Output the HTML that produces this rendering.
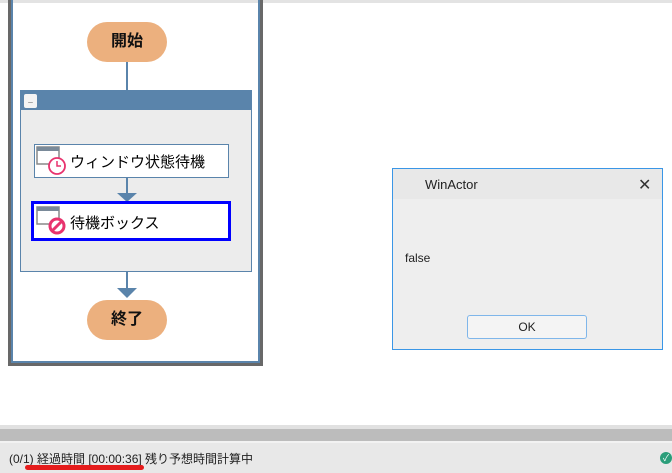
<!DOCTYPE html>
<html><head><meta charset="utf-8"><style>
*{margin:0;padding:0;box-sizing:border-box}
body{width:672px;height:473px;background:#fff;position:relative;overflow:hidden;font-family:"Liberation Sans","Noto Sans CJK JP",sans-serif}
.a{position:absolute}
.pill{background:#ecb07e;border-radius:20px;width:80px;height:40px;text-align:center;line-height:40px;font-weight:bold;font-size:16px;color:#111}
.box{background:#fff;border:1px solid #5a84ab;font-size:15px;color:#111}
</style></head><body>
<div class="a" style="left:0;top:0;width:672px;height:3px;background:#e3e3e3"></div>
<div class="a" style="left:8px;top:0;width:255px;height:366px;border:3px solid #686868;border-top:none"></div>
<div class="a" style="left:11px;top:0;width:249px;height:363px;border:2px solid #5a84ab;border-top:none"></div>
<div class="a pill" style="left:87px;top:22px">開始</div>
<div class="a" style="left:126px;top:62px;width:2px;height:28px;background:#5a84ab"></div>
<div class="a" style="left:20px;top:90px;width:232px;height:182px;background:#ececec;border:1px solid #5a84ab"></div>
<div class="a" style="left:20px;top:90px;width:232px;height:20px;background:#5a84ab"></div>
<div class="a" style="left:24px;top:94px;width:13px;height:14px;background:#f4f4f4;border-radius:2px;font-size:8px;line-height:10px;text-align:center;color:#666">_</div>
<div class="a box" style="left:34px;top:144px;width:195px;height:34px"></div>
<svg class="a" style="left:36px;top:146px" width="32" height="30"><rect x="1" y="1" width="22" height="17" fill="#fff" stroke="#888" stroke-width="1.5"/><rect x="1" y="1" width="22" height="4" fill="#7a8a99"/><circle cx="21" cy="20" r="8" fill="#fff" stroke="#e8336e" stroke-width="1.8"/><path d="M21 15v5h4" fill="none" stroke="#e8336e" stroke-width="1.5"/></svg>
<div class="a" style="left:70px;top:151px;font-size:15px">ウィンドウ状態待機</div>
<div class="a" style="left:126px;top:178px;width:2px;height:16px;background:#5a84ab"></div>
<div class="a" style="left:117px;top:193px;border-left:10px solid transparent;border-right:10px solid transparent;border-top:9px solid #5a84ab"></div>
<div class="a" style="left:31px;top:201px;width:200px;height:40px;background:#fff;border:3px solid #0000ff"></div>
<svg class="a" style="left:36px;top:206px" width="32" height="30"><rect x="1" y="1" width="22" height="17" fill="#fff" stroke="#888" stroke-width="1.5"/><rect x="1" y="1" width="22" height="4" fill="#7a8a99"/><circle cx="21" cy="20" r="7" fill="#fff" stroke="#e8336e" stroke-width="3"/><path d="M16 25L26 15" stroke="#e8336e" stroke-width="3"/></svg>
<div class="a" style="left:70px;top:212px;font-size:15px">待機ボックス</div>
<div class="a" style="left:126px;top:272px;width:2px;height:18px;background:#5a84ab"></div>
<div class="a" style="left:117px;top:288px;border-left:10px solid transparent;border-right:10px solid transparent;border-top:10px solid #5a84ab"></div>
<div class="a pill" style="left:87px;top:300px">終了</div>

<div class="a" style="left:392px;top:168px;width:271px;height:182px;background:#eeeeee;border:1px solid #3a96e6"></div>
<div class="a" style="left:393px;top:169px;width:269px;height:30px;background:#e8e8e8"></div>
<div class="a" style="left:425px;top:177px;font-size:13px;color:#222">WinActor</div>
<div class="a" style="left:638px;top:175px;font-size:16px;color:#333">✕</div>
<div class="a" style="left:405px;top:251px;font-size:12px;color:#222">false</div>
<div class="a" style="left:467px;top:315px;width:120px;height:24px;background:#f4f4f4;border:1px solid #7fb6ea;border-radius:3px;text-align:center;line-height:22px;font-size:12px;color:#222">OK</div>

<div class="a" style="left:0;top:425px;width:672px;height:4px;background:#e1e1e1"></div>
<div class="a" style="left:0;top:429px;width:672px;height:12px;background:#bcbcbc"></div>
<div class="a" style="left:0;top:441px;width:672px;height:32px;background:#e8e8e8;border-top:2px solid #f2f2f2"></div>
<div class="a" style="left:9px;top:450px;font-size:12px;color:#222">(0/1) 経過時間 [00:00:36] 残り予想時間計算中</div>
<div class="a" style="left:25px;top:465px;width:119px;height:5px;background:#e51c1c;border-radius:3px"></div>
<div class="a" style="left:660px;top:452px;width:12px;height:12px;border-radius:6px;background:#2b9e7a;color:#fff;font-size:9px;line-height:12px;text-align:center">✓</div>
</body></html>
